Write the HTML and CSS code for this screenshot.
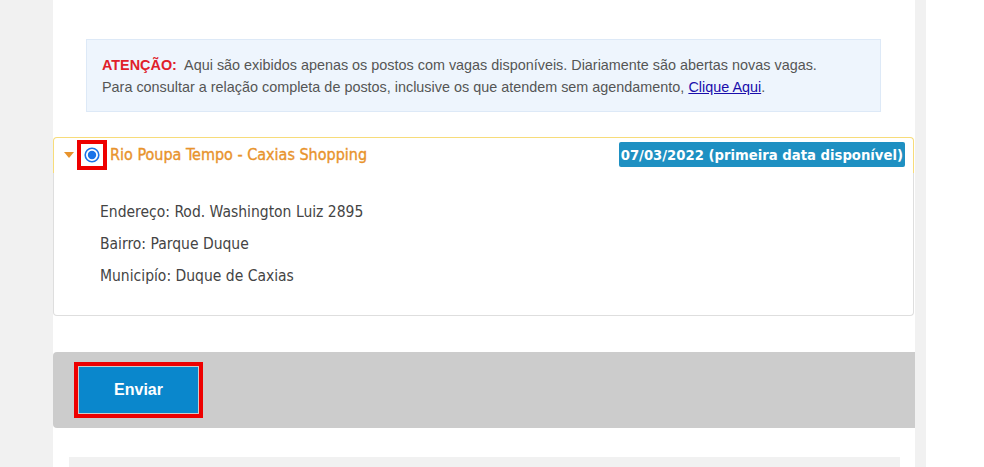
FILE: index.html
```html
<!DOCTYPE html>
<html lang="pt-BR">
<head>
<meta charset="utf-8">
<title>Postos</title>
<link rel="stylesheet" href="styles.css">
</head>
<body>
<div class="page">
  <div class="gutter-left"></div>
  <main class="main">
    <div class="notice">
      <p><span class="warn">ATENÇÃO:</span>&nbsp; Aqui são exibidos apenas os postos com vagas disponíveis. Diariamente são abertas novas vagas.</p>
      <p>Para consultar a relação completa de postos, inclusive os que atendem sem agendamento, <a href="#">Clique Aqui</a>.</p>
    </div>

    <section class="card">
      <div class="card-head">
        <span class="caret"></span>
        <span class="radio-box">
          <svg width="16" height="16" viewBox="0 0 16 16"><circle cx="8" cy="8" r="6.8" fill="#fff" stroke="#1a73e8" stroke-width="1.6"/><circle cx="8" cy="8" r="4.2" fill="#1a73e8"/></svg>
        </span>
        <span class="title">Rio Poupa Tempo - Caxias Shopping</span>
        <span class="badge">07/03/2022 (primeira data disponível)</span>
      </div>
      <div class="card-body">
        <p>Endereço: Rod. Washington Luiz 2895</p>
        <p>Bairro: Parque Duque</p>
        <p>Municipío: Duque de Caxias</p>
      </div>
    </section>

    <div class="actions">
      <span class="btn-frame"><button class="btn" type="button">Enviar</button></span>
    </div>

    <div class="footer-box"></div>
  </main>
  <div class="gutter-right"></div>
</div>
</body>
</html>
```
FILE: styles.css
```css
html, body {
  margin: 0;
  padding: 0;
  background: #ffffff;
}

.page {
  display: flex;
  height: 467px;
  overflow: hidden;
}

.gutter-left {
  width: 53px;
  flex: none;
  background: #f1f1f1;
}

.gutter-right {
  width: 11px;
  flex: none;
  background: #f1f1f1;
}

.main {
  width: 862px;
  flex: none;
  background: #ffffff;
  padding-top: 39px;
  box-sizing: border-box;
}

.notice {
  margin: 0 34px 0 33px;
  height: 73px;
  box-sizing: border-box;
  background: #eef5fd;
  border: 1px solid #dde9f7;
  padding: 14px 15px;
  font-family: "Liberation Sans", Arial, sans-serif;
  font-size: 14.4px;
  line-height: 22px;
  color: #555555;
}

.notice p {
  margin: 0;
}

.warn {
  color: #e0202a;
  font-weight: bold;
}

.notice a {
  color: #1a0dab;
  text-decoration: underline;
}

.card {
  margin: 25px 1px 0 0;
  font-family: "DejaVu Sans Condensed", "DejaVu Sans", Tahoma, sans-serif;
}

.card-head {
  display: flex;
  align-items: center;
  height: 36px;
  box-sizing: border-box;
  border: 1px solid #f7dc7a;
  border-bottom: none;
  border-radius: 4px 4px 0 0;
  padding: 0 8px 2px 10px;
}

.caret {
  width: 0;
  height: 0;
  border-left: 5px solid transparent;
  border-right: 5px solid transparent;
  border-top: 6px solid #e8932c;
  margin-right: 3px;
}

.radio-box {
  display: flex;
  align-items: center;
  justify-content: center;
  width: 30px;
  height: 30px;
  box-sizing: border-box;
  border: 4px solid #ee0000;
  background: #ffffff;
}

.radio-box svg {
  display: block;
}

.title {
  margin-left: 3px;
  color: #e8932c;
  font-size: 16px;
  font-weight: normal;
  -webkit-text-stroke: 0.35px #e8932c;
  flex: 1;
}

.badge {
  background: #1e90c2;
  color: #ffffff;
  font-size: 14.7px;
  font-weight: bold;
  line-height: 25px;
  padding: 0 2px;
  border-radius: 2px;
}

.card-body {
  border: 1px solid #dedede;
  border-top: none;
  border-radius: 0 0 4px 4px;
  padding: 23px 0 23px 46px;
  color: #444444;
  font-size: 15.5px;
  line-height: 32px;
}

.card-body p {
  margin: 0;
}

.actions {
  margin: 36px 0 0 0;
  height: 76px;
  background: #cccccc;
  border-radius: 4px 0 0 4px;
  display: flex;
  align-items: center;
  padding-left: 21px;
}

.btn-frame {
  display: block;
  border: 4px solid #ee0000;
  padding: 1px;
}

.btn {
  display: block;
  width: 119px;
  height: 46px;
  border: none;
  background: #0a87cc;
  color: #ffffff;
  font-family: "Liberation Sans", Arial, sans-serif;
  font-size: 16px;
  font-weight: bold;
  cursor: pointer;
  margin: 0;
  padding: 0;
}

.footer-box {
  margin: 29px 15px 0 16px;
  height: 40px;
  background: #f1f1f1;
}
```
